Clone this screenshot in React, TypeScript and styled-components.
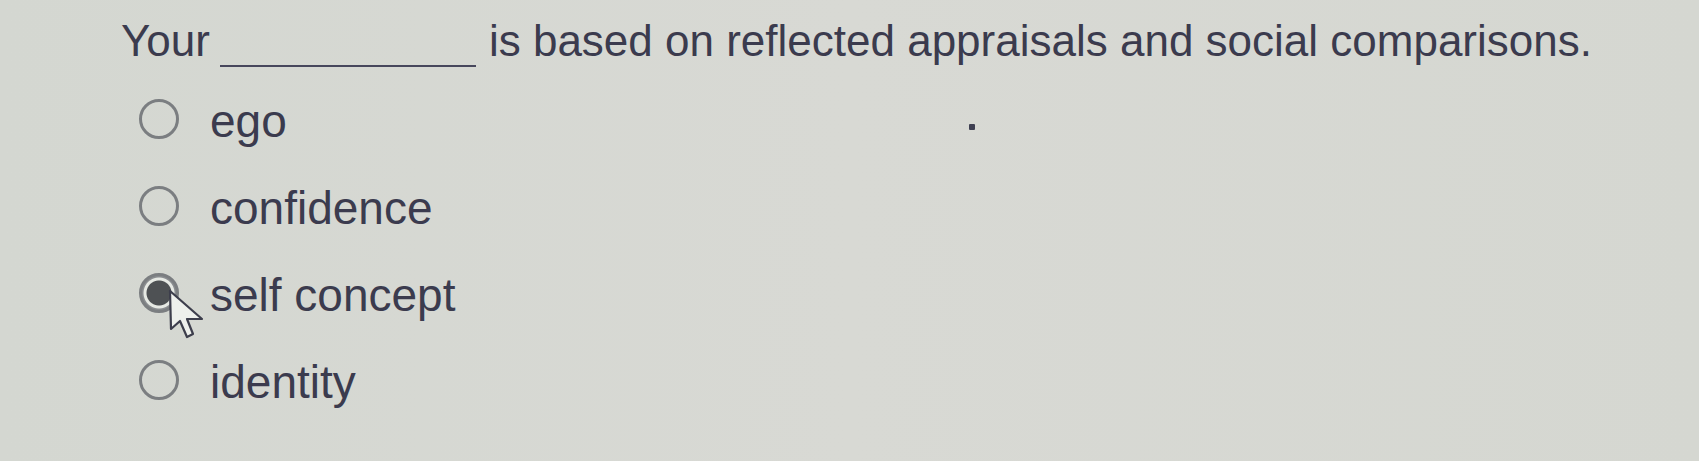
import React from 'react';
import styled, { createGlobalStyle } from 'styled-components';

const GlobalStyle = createGlobalStyle`
  html, body {
    margin: 0;
    padding: 0;
    background: #d6d8d3;
  }
  body {
    font-family: 'Liberation Sans', Arial, sans-serif;
    color: #3b3b4e;
  }
`;

const OPTIONS = ['ego', 'confidence', 'self concept', 'identity'];
const SELECTED = 2;

const Page = styled.div`
  position: relative;
  width: 1699px;
  height: 461px;
  padding: 16px 0 0 121px;
  box-sizing: border-box;
  background: linear-gradient(90deg, #d4d7d1 0%, #d8d9d4 50%, #d5d7d1 100%);
`;

const Question = styled.div`
  font-size: 44px;
  line-height: 50px;
  white-space: nowrap;
`;

const Blank = styled.span`
  display: inline-block;
  width: 256px;
  margin: 0 13px 0 10px;
  border-bottom: 2.5px solid #47475c;
  vertical-align: -11px;
`;

const OptionList = styled.div`
  display: flex;
  flex-direction: column;
  padding: 8px 0 0 18px;
`;

const Row = styled.label`
  display: flex;
  align-items: center;
  gap: 31px;
  height: 87px;
  font-size: 46px;
`;

const Radio = styled.span<{ $checked?: boolean }>`
  width: 34px;
  height: 34px;
  border-radius: 50%;
  border: 3px solid #7b7e81;
  box-sizing: content-box;
  flex: none;
  background: ${({ $checked }) =>
    $checked ? 'radial-gradient(circle, #4e5154 0 12px, #e6e9e4 13px 15px, #8a8d90 16px)' : 'transparent'};
`;

const Label = styled.span`
  padding-top: 5px;
`;

const Cursor = styled.svg`
  position: absolute;
  left: 167px;
  top: 288px;
`;

const Speck = styled.span`
  position: absolute;
  left: 969px;
  top: 124px;
  width: 6px;
  height: 6px;
  border-radius: 1px;
  background: #3f4052;
`;

export default function App() {
  return (
    <>
      <GlobalStyle />
      <Page>
        <Question>
          Your<Blank />is based on reflected appraisals and social comparisons.
        </Question>
        <OptionList>
          {OPTIONS.map((o, i) => (
            <Row key={o}>
              <Radio $checked={i === SELECTED} />
              <Label>{o}</Label>
            </Row>
          ))}
        </OptionList>
        <Speck />
        <Cursor width="40" height="54" viewBox="0 0 40 54">
          <path
            d="M3 3 L4 41 L13 33 L20 49 L26 46 L20 31 L35 31 Z"
            fill="#eef0ec"
            stroke="#3d3e4c"
            strokeWidth="2.2"
            strokeLinejoin="round"
          />
        </Cursor>
      </Page>
    </>
  );
}
